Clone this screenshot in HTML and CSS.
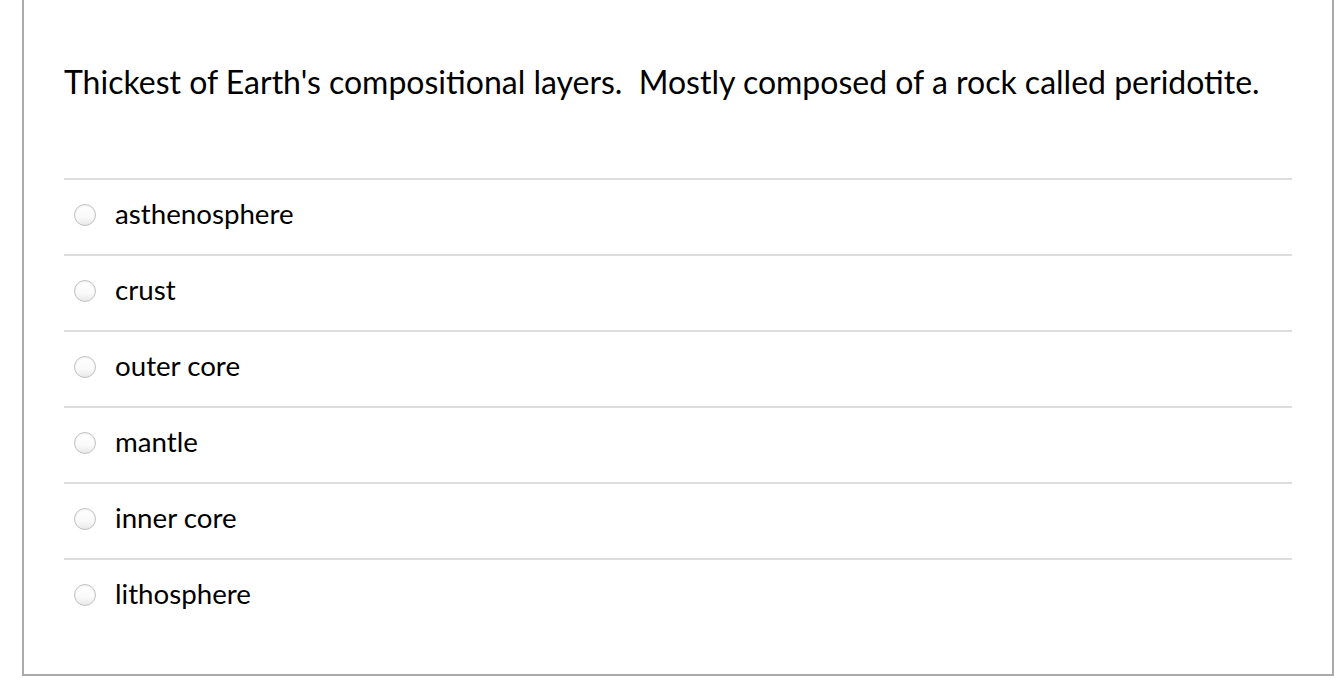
FILE: index.html
```html
<!DOCTYPE html>
<html lang="en">

<head>
    <meta charset="UTF-8">
    <title>Quiz Question</title>
    <link rel="stylesheet" href="styles.css">
</head>

<body>

    <!-- Question Card -->
    <div class="question-card">
        <p class="question-text">Thickest of Earth's compositional layers.&nbsp; Mostly composed of a rock called peridotite.</p>

        <!-- Answers -->
        <div class="answers">
            <label class="answer"><span class="radio"></span><span class="answer-text">asthenosphere</span></label>
            <label class="answer"><span class="radio"></span><span class="answer-text">crust</span></label>
            <label class="answer"><span class="radio"></span><span class="answer-text">outer core</span></label>
            <label class="answer"><span class="radio"></span><span class="answer-text">mantle</span></label>
            <label class="answer"><span class="radio"></span><span class="answer-text">inner core</span></label>
            <label class="answer"><span class="radio"></span><span class="answer-text">lithosphere</span></label>
        </div>
    </div>

</body>

</html>
```

FILE: styles.css
```css
/* Global Styles */
body {
    font-family: Lato, 'Noto Sans', sans-serif;
    background: #fff;
    color: #000;
    margin: 0;
    padding: 0 4px 10px 22px;
}

/* Question Card */
.question-card {
    border: 2px solid #aaa;
    border-top: none;
    padding: 62px 40px 40px;
}

.question-text {
    margin: 0 0 76px;
    font-size: 32px;
    line-height: 40px;
}

/* Answers */
.answer {
    display: flex;
    align-items: center;
    box-sizing: border-box;
    height: 76px;
    padding-bottom: 4px;
    border-top: 2px solid #ddd;
    cursor: pointer;
}

.radio {
    box-sizing: border-box;
    width: 22px;
    height: 22px;
    margin: 0 19px 0 10px;
    border: 1px solid #c2c2c2;
    border-radius: 50%;
    background: linear-gradient(180deg, #fff 0%, #fafafa 60%, #e9e9e9 100%);
    box-shadow: inset 0 1px 2px rgba(0, 0, 0, 0.06);
}

.answer-text {
    font-size: 27.7px;
    padding-bottom: 3px;
}
```
